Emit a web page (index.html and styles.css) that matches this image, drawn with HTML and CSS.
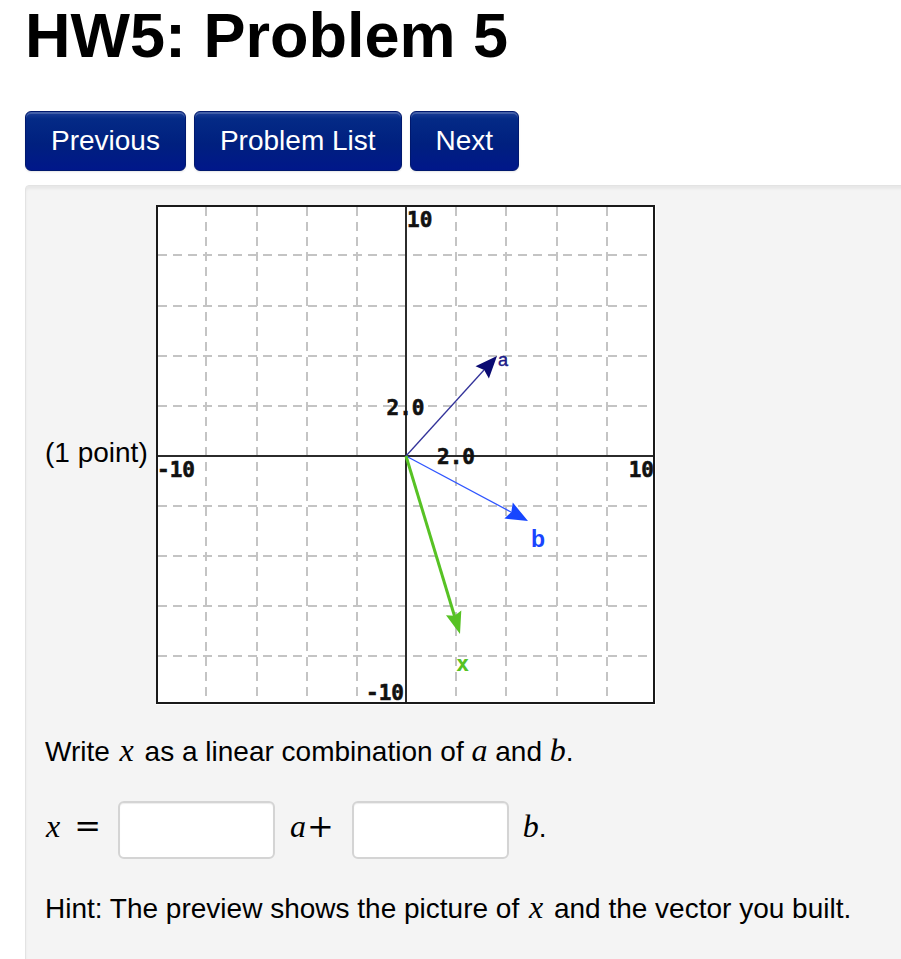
FILE: index.html
```html
<!DOCTYPE html>
<html lang="en">
<head>
<meta charset="utf-8">
<title>HW5: Problem 5</title>
<link rel="stylesheet" href="styles.css">
</head>
<body>
<div class="page">
  <h1 class="title">HW5: Problem 5</h1>
  <nav class="nav">
    <a class="btn" href="#">Previous</a>
    <a class="btn" href="#">Problem List</a>
    <a class="btn" href="#">Next</a>
  </nav>
  <div class="well">
    <div class="intro">(1 point) <svg class="graph" width="500" height="500" viewBox="0 0 500 500" xmlns="http://www.w3.org/2000/svg">
        <rect x="0" y="0" width="500" height="500" fill="#ffffff"/>
        <g class="grid" stroke="#c4c4c4" stroke-width="2" stroke-dasharray="9 6">
          <line x1="50" y1="2" x2="50" y2="498"/>
          <line x1="101" y1="2" x2="101" y2="498"/>
          <line x1="151" y1="2" x2="151" y2="498"/>
          <line x1="201" y1="2" x2="201" y2="498"/>
          <line x1="300" y1="2" x2="300" y2="498"/>
          <line x1="350" y1="2" x2="350" y2="498"/>
          <line x1="401" y1="2" x2="401" y2="498"/>
          <line x1="451" y1="2" x2="451" y2="498"/>
          <line x1="2" y1="50" x2="498" y2="50"/>
          <line x1="2" y1="101" x2="498" y2="101"/>
          <line x1="2" y1="151" x2="498" y2="151"/>
          <line x1="2" y1="201" x2="498" y2="201"/>
          <line x1="2" y1="301" x2="498" y2="301"/>
          <line x1="2" y1="351" x2="498" y2="351"/>
          <line x1="2" y1="401" x2="498" y2="401"/>
          <line x1="2" y1="451" x2="498" y2="451"/>
        </g>
        <g stroke="#2b2b2b" stroke-width="2">
          <line x1="250" y1="1" x2="250" y2="499"/>
          <line x1="1" y1="251" x2="499" y2="251"/>
        </g>
        <rect x="1" y="1" width="497" height="497" fill="none" stroke="#1a1a1a" stroke-width="2"/>
        <g class="axis-labels" fill="#111111" stroke="#111111" stroke-width="0.6">
          <text x="251" y="22">10</text>
          <text x="249.5" y="210" text-anchor="middle">2.0</text>
          <text x="300" y="259" text-anchor="middle">2.0</text>
          <text x="1" y="272">-10</text>
          <text x="498" y="272" text-anchor="end">10</text>
          <text x="248" y="495" text-anchor="end">-10</text>
        </g>
        <!-- vector a -->
        <line x1="250" y1="251" x2="328" y2="165" stroke="#33339a" stroke-width="1.3"/>
        <polygon points="341,151 319.5,161.2 328.2,165.1 332.9,173.4" fill="#0b0b72"/>
        <text class="vlabel-a" x="342" y="161">a</text>
        <!-- vector b -->
        <line x1="250" y1="251" x2="355" y2="307" stroke="#2f55ff" stroke-width="1.3"/>
        <polygon points="372,316 348.4,313.6 355.3,307 356.8,297.6" fill="#1646ff"/>
        <text class="vlabel-b" x="375" y="342">b</text>
        <!-- vector x -->
        <line x1="250" y1="251" x2="298.5" y2="411" stroke="#57c224" stroke-width="3"/>
        <polygon points="304,429 290,410.2 298.5,410.8 305.3,405.6" fill="#57c224"/>
        <text class="vlabel-x" x="300" y="466">x</text>
      </svg></div>
    <p class="line1">Write <span class="m mxv">x</span> as a linear combination of <span class="m">a</span> and <span class="m">b</span>.</p>
    <div class="answer"><span class="m mx mxv">x</span><span class="op eq">=</span><input class="ans ans1" type="text" aria-label="coefficient of a"><span class="m ma">a</span><span class="op plus">+</span><input class="ans ans2" type="text" aria-label="coefficient of b"><span class="m mb">b</span><span class="dot">.</span></div>
    <p class="hint">Hint: The preview shows the picture of <span class="m mxv">x</span> and the vector you built.</p>
  </div>
</div>
</body>
</html>
```
FILE: styles.css
```css
html, body {
  margin: 0;
  padding: 0;
  background: #ffffff;
  overflow: hidden;
}

body {
  font-family: "Liberation Sans", Arial, sans-serif;
  font-size: 28px;
  line-height: 40px;
  color: #000000;
}

.page {
  padding-left: 25px;
}

.title {
  margin: 1px 0 0 0;
  font-size: 63px;
  line-height: 69px;
  font-weight: bold;
  color: #000000;
}

.nav {
  display: flex;
  gap: 8px;
  margin-top: 41px;
}

.btn {
  display: block;
  padding: 9px 25px;
  line-height: 40px;
  font-size: 28px;
  color: #ffffff;
  text-decoration: none;
  border: 1px solid #00186e;
  border-radius: 6px;
  background: linear-gradient(to bottom, #1d3f98 0%, #042a86 12%, #00207f 55%, #00178a 100%);
  box-shadow: inset 0 2px 0 rgba(255, 255, 255, 0.18), 0 1px 2px rgba(0, 0, 0, 0.1);
}

.well {
  margin-top: 14px;
  margin-right: -40px;
  padding: 19px 19px 60px 19px;
  background: #f4f4f4;
  border: 1px solid #e3e3e3;
  border-radius: 4px;
  box-shadow: inset 0 3px 3px rgba(0, 0, 0, 0.05);
}

.intro {
  line-height: 40px;
}

.graph {
  vertical-align: middle;
}

.axis-labels text {
  font-family: "DejaVu Sans Mono", monospace;
  font-weight: bold;
  font-size: 21px;
}

.vlabel-a {
  font-family: "Liberation Sans", sans-serif;
  font-size: 18px;
  fill: #1b1b8a;
  stroke: #1b1b8a;
  stroke-width: 0.4;
}

.vlabel-b {
  font-family: "Liberation Sans", sans-serif;
  font-weight: bold;
  font-size: 23px;
  fill: #1a44ff;
}

.vlabel-x {
  font-family: "DejaVu Sans Mono", monospace;
  font-weight: bold;
  font-size: 22px;
  fill: #57c224;
}

.line1,
.hint {
  margin: 0;
}

.line1 {
  margin-top: 27px;
}

.answer {
  margin-top: 29px;
  line-height: 40px;
}

.hint {
  margin-top: 30px;
}

.m {
  font-family: "Liberation Serif", "Times New Roman", serif;
  font-style: italic;
  font-size: 32px;
  line-height: 1;
}

.mxv {
  padding: 0 3px 0 2px;
}

.mx {
  padding-left: 1px;
}

.op {
  font-family: "DejaVu Serif", serif;
  font-size: 32px;
  line-height: 1;
}

.eq {
  margin-left: 11px;
}

.ans {
  box-sizing: border-box;
  width: 157px;
  height: 58px;
  vertical-align: middle;
  margin: 0 0 0 17px;
  padding: 4px 12px;
  border: 2px solid #d4d4d4;
  border-radius: 6px;
  background: #ffffff;
  box-shadow: inset 0 1px 1px rgba(0, 0, 0, 0.075);
  font-size: 28px;
  font-family: "Liberation Sans", Arial, sans-serif;
}

.ma {
  margin-left: 15px;
}

.plus {
  margin-left: 1px;
}

.ans2 {
  margin-left: 18px;
}

.mb {
  margin-left: 14px;
}

.dot {
  font-size: 28px;
}
```
